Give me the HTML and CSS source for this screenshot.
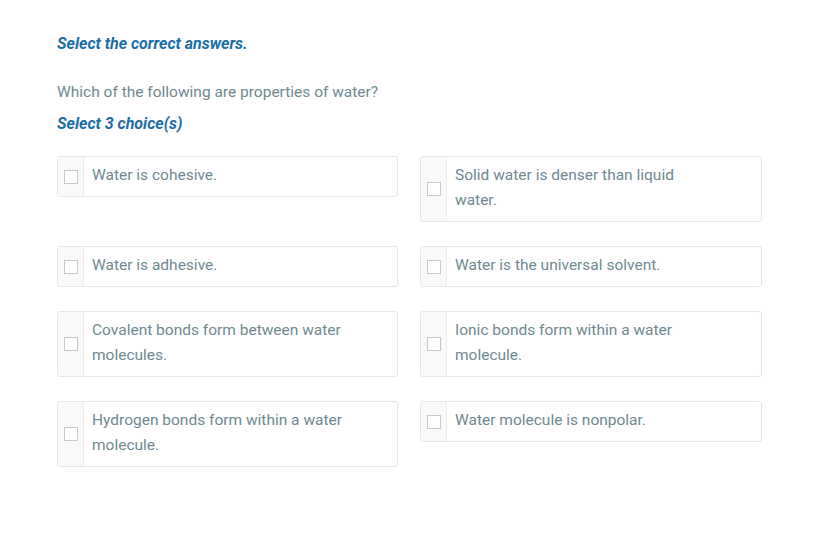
FILE: index.html
```html
<!DOCTYPE html>
<html>
<head>
<meta charset="utf-8">
<link rel="stylesheet" href="styles.css">
</head>
<body>
<div class="page">
  <p class="instruction">Select the correct answers.</p>
  <p class="question">Which of the following are properties of water?</p>
  <p class="hint">Select 3 choice(s)</p>
  <div class="choices">
    <label class="choice"><span class="box-cell"><span class="box"></span></span><span class="text">Water is cohesive.</span></label>
    <label class="choice"><span class="box-cell"><span class="box"></span></span><span class="text">Solid water is denser than liquid<br>water.</span></label>
    <label class="choice"><span class="box-cell"><span class="box"></span></span><span class="text">Water is adhesive.</span></label>
    <label class="choice"><span class="box-cell"><span class="box"></span></span><span class="text">Water is the universal solvent.</span></label>
    <label class="choice"><span class="box-cell"><span class="box"></span></span><span class="text">Covalent bonds form between water<br>molecules.</span></label>
    <label class="choice"><span class="box-cell"><span class="box"></span></span><span class="text">Ionic bonds form within a water<br>molecule.</span></label>
    <label class="choice"><span class="box-cell"><span class="box"></span></span><span class="text">Hydrogen bonds form within a water<br>molecule.</span></label>
    <label class="choice"><span class="box-cell"><span class="box"></span></span><span class="text">Water molecule is nonpolar.</span></label>
  </div>
</div>
</body>
</html>
```
FILE: styles.css
```css
html, body {
  margin: 0;
  padding: 0;
  background: #ffffff;
}
body {
  font-family: Roboto, "Liberation Sans", sans-serif;
  color: #6f8990;
}
.page {
  padding: 34px 76px 0 57px;
}
.instruction {
  margin: 0;
  font-size: 16px;
  line-height: 20px;
  font-weight: 700;
  font-style: italic;
  color: #1c6ea4;
}
.question {
  margin: 26px 0 0 0;
  font-size: 15.5px;
  line-height: 24px;
}
.hint {
  margin: 10px 0 0 0;
  font-size: 16px;
  line-height: 20px;
  font-weight: 700;
  font-style: italic;
  color: #1c6ea4;
}
.choices {
  margin-top: 22px;
  display: grid;
  grid-template-columns: 341px 342px;
  column-gap: 22px;
  row-gap: 24px;
  align-items: start;
}
.choice {
  display: flex;
  border: 1px solid #e6e6e6;
  border-radius: 3px;
  background: #fff;
}
.box-cell {
  width: 25px;
  flex: none;
  display: flex;
  align-items: center;
  justify-content: center;
  background: #f9f9f9;
  border-right: 1px solid #ececec;
  border-radius: 3px 0 0 3px;
}
.box {
  width: 12px;
  height: 12px;
  border: 1px solid #c8c8c8;
  background: #fff;
}
.text {
  padding: 6px 9px 8px 8px;
  font-size: 15.5px;
  line-height: 25px;
}
```
